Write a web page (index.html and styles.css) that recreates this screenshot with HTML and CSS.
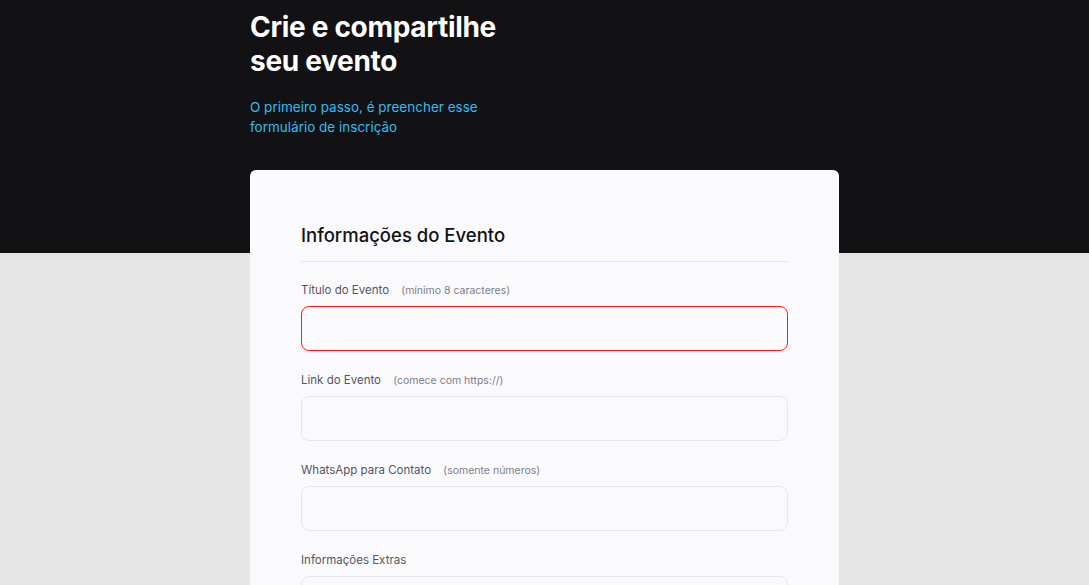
FILE: index.html
```html
<!DOCTYPE html>
<html lang="pt-BR">
<head>
    <meta charset="UTF-8">
    <meta name="viewport" content="width=device-width, initial-scale=1.0">
    <title>Cadastrar Evento</title>
    <link rel="stylesheet" href="styles.css">
</head>
<body>

<header class="topo">
    <div class="conteudo">
        <h1>Crie e compartilhe seu evento</h1>
        <p>O primeiro passo, é preencher esse formulário de inscrição</p>
    </div>
</header>

<main class="conteudo">
    <form class="cartao">
        <fieldset>
            <legend>Informações do Evento</legend>

            <div class="campo">
                <label for="titulo">Título do Evento <small>(mínimo 8 caracteres)</small></label>
                <input type="text" id="titulo" class="erro">
            </div>

            <div class="campo">
                <label for="link">Link do Evento <small>(comece com https://)</small></label>
                <input type="text" id="link">
            </div>

            <div class="campo">
                <label for="whatsapp">WhatsApp para Contato <small>(somente números)</small></label>
                <input type="text" id="whatsapp">
            </div>

            <div class="campo">
                <label for="extras">Informações Extras</label>
                <textarea id="extras"></textarea>
            </div>
        </fieldset>
    </form>
</main>

</body>
</html>
```

FILE: styles.css
```css
* {
    box-sizing: border-box;
}

body {
    margin: 0;
    background: #e5e5e5;
    font-family: Inter, "Noto Sans", sans-serif;
}

.conteudo {
    width: 589px;
    margin: 0 auto;
}

.topo {
    background: #121214;
    height: 253px;
    padding-top: 10px;
}

.topo h1 {
    margin: 0;
    max-width: 260px;
    color: #ffffff;
    font-size: 28px;
    line-height: 34px;
    font-weight: 700;
    letter-spacing: -0.3px;
}

.topo p {
    margin: 19px 0 0;
    max-width: 240px;
    color: #2fbcf7;
    font-size: 13.5px;
    line-height: 20px;
}

.cartao {
    margin-top: -83px;
    background: #fafafc;
    border-radius: 6px;
    padding: 53px 51px 60px;
    min-height: 500px;
}

fieldset {
    border: none;
    margin: 0;
    padding: 0;
}

legend {
    width: 100%;
    padding: 0 0 14px;
    border-bottom: 1px solid #e6e6f0;
    color: #121214;
    font-size: 18.5px;
    line-height: 24px;
    font-weight: 500;
}

.campo {
    margin-top: 18px;
}

.campo + .campo {
    margin-top: 19px;
}

label {
    display: block;
    height: 20px;
    color: #55555f;
    font-size: 11.5px;
    line-height: 20px;
}

label small {
    margin-left: 9px;
    color: #807c8a;
    font-size: 10.5px;
    line-height: 1;
}

input, textarea {
    display: block;
    width: 100%;
    height: 45px;
    margin-top: 6px;
    background: #fafafc;
    border: 1px solid #e6e6f0;
    border-radius: 8px;
    padding: 0 16px;
    font: inherit;
    outline: none;
}

textarea {
    height: 120px;
    resize: vertical;
}

input.erro {
    border-color: #ff1a1a;
}
```
